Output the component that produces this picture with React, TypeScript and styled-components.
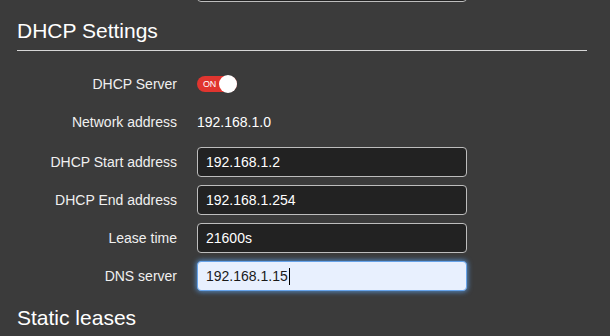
import React from "react";
import styled, { createGlobalStyle } from "styled-components";

const GlobalStyle = createGlobalStyle`
  html, body {
    margin: 0;
    padding: 0;
    background: #3b3b3b;
    font-family: "Liberation Sans", Arial, sans-serif;
    color: #f2f2f2;
    overflow: hidden;
  }
`;

const Page = styled.div`
  width: 610px;
  height: 336px;
  overflow: hidden;
  padding: 0 23px 0 17px;
  box-sizing: border-box;
`;

const Form = styled.div`
  display: flex;
  flex-direction: column;
  gap: 8px;
`;

const Row = styled.div<{ $push?: number }>`
  display: grid;
  grid-template-columns: 160px 270px;
  column-gap: 20px;
  align-items: center;
  height: 30px;
  margin-top: ${(p) => p.$push ?? 0}px;
`;

const Label = styled.div`
  text-align: right;
  font-size: 14px;
  color: #f0f0f0;
`;

const Heading = styled.h2<{ $ruled?: boolean }>`
  margin: 0;
  font-size: 21px;
  font-weight: normal;
  line-height: 24px;
  color: #ffffff;
  padding-bottom: ${(p) => (p.$ruled ? "7px" : "0")};
  border-bottom: ${(p) => (p.$ruled ? "1px solid #d6d6d6" : "none")};
`;

const Field = styled.input`
  box-sizing: border-box;
  width: 270px;
  height: 30px;
  padding: 0 8px;
  border: 1px solid #bdbdbd;
  border-radius: 4px;
  background: #222222;
  color: #ffffff;
  font-family: "Liberation Sans", Arial, sans-serif;
  font-size: 14px;
  outline: none;
`;

const FocusedField = styled.div`
  box-sizing: border-box;
  width: 270px;
  height: 30px;
  padding: 0 8px;
  border: 1px solid #66a3ea;
  border-radius: 4px;
  background: #e8f0fe;
  color: #1a1a1a;
  font-size: 14px;
  display: flex;
  align-items: center;
  box-shadow: 0 0 5px 1px rgba(92, 160, 235, 0.75);
`;

const Caret = styled.span`
  display: inline-block;
  width: 1px;
  height: 17px;
  background: #000;
  margin-left: 1px;
`;

const Value = styled.div`
  font-size: 14px;
  color: #ffffff;
`;

const Toggle = styled.div<{ $on: boolean }>`
  position: relative;
  width: 40px;
  height: 16px;
  border-radius: 8px;
  background: ${(p) => (p.$on ? "#e0352f" : "#777")};
  display: flex;
  align-items: center;
  box-sizing: border-box;
  padding-left: 6px;
`;

const ToggleText = styled.span`
  font-size: 9px;
  color: #fff;
  letter-spacing: -0.2px;
`;

const Knob = styled.span`
  position: absolute;
  right: 0;
  top: -1px;
  width: 18px;
  height: 18px;
  border-radius: 50%;
  background: #ffffff;
`;

const Section = styled.section`
  margin-top: 17px;
`;

const RuleGap = styled.div`
  height: 18px;
`;

const LeasesHeading = styled(Heading)`
  margin-top: 15px;
`;

const rows = [
  { label: "DHCP Start address", value: "192.168.1.2" },
  { label: "DHCP End address", value: "192.168.1.254" },
  { label: "Lease time", value: "21600s" },
];

export default function App() {
  return (
    <Page>
      <GlobalStyle />
      <Row $push={-28}>
        <Label />
        <Field readOnly value="" />
      </Row>
      <Section>
        <Heading $ruled>DHCP Settings</Heading>
        <RuleGap />
        <Form>
          <Row>
            <Label>DHCP Server</Label>
            <Toggle $on>
              <ToggleText>ON</ToggleText>
              <Knob />
            </Toggle>
          </Row>
          <Row>
            <Label>Network address</Label>
            <Value>192.168.1.0</Value>
          </Row>
          {rows.map((r, i) => (
            <Row key={r.label} $push={i === 0 ? 2 : 0}>
              <Label>{r.label}</Label>
              <Field readOnly value={r.value} />
            </Row>
          ))}
          <Row>
            <Label>DNS server</Label>
            <FocusedField>
              192.168.1.15
              <Caret />
            </FocusedField>
          </Row>
        </Form>
        <LeasesHeading>Static leases</LeasesHeading>
      </Section>
    </Page>
  );
}
